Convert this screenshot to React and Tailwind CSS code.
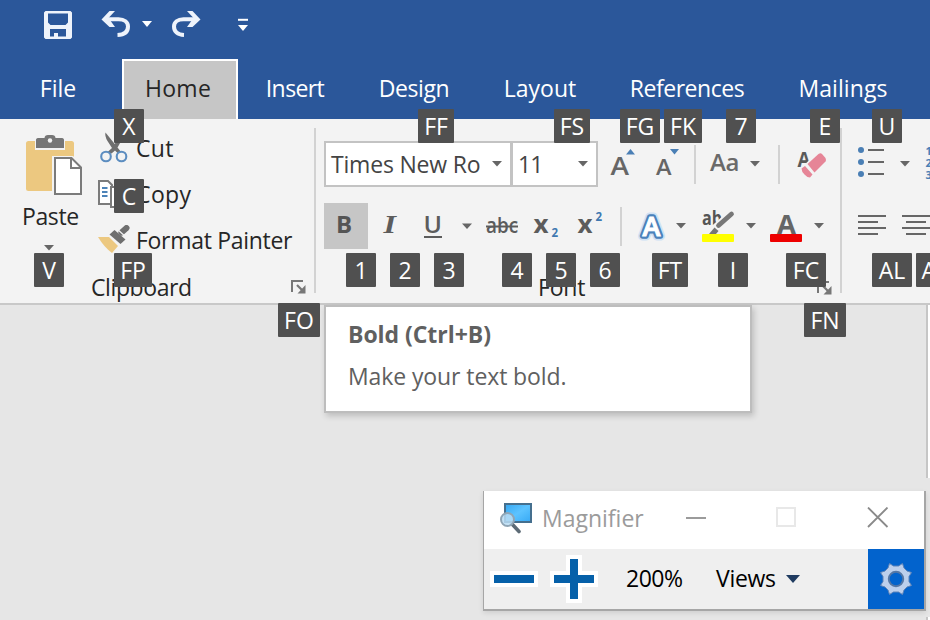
const TABS = [
  { name: 'File',       cls: 'w-[116px] text-white' },
  { name: 'Home',       cls: 'ml-1.5 w-[116px] border-2 border-b-0 border-white bg-[#c6c6c6] pr-1 pb-1 text-[#262626] tracking-[0.3px]' },
  { name: 'Insert',     cls: 'w-[114px] text-white tracking-[-0.6px]' },
  { name: 'Design',     cls: 'w-[124px] text-white tracking-[-0.4px]' },
  { name: 'Layout',     cls: 'w-[128px] text-white' },
  { name: 'References', cls: 'w-[166px] text-white tracking-[-0.45px]' },
  { name: 'Mailings',   cls: 'w-[146px] text-white tracking-[0.1px]' },
]

// access-key badges floating over the ribbon
const KEY_TIPS = [
  { k: 'X',  x: 114, y: 109, w: 30 },
  { k: 'FF', x: 418, y: 109, w: 36 },
  { k: 'FS', x: 554, y: 109, w: 36 },
  { k: 'FG', x: 620, y: 109, w: 40 },
  { k: 'FK', x: 664, y: 109, w: 38 },
  { k: '7',  x: 726, y: 109, w: 30 },
  { k: 'E',  x: 810, y: 109, w: 30 },
  { k: 'U',  x: 872, y: 109, w: 30 },
  { k: 'C',  x: 114, y: 179, w: 30 },
  { k: 'V',  x: 34,  y: 253, w: 30 },
  { k: 'FP', x: 114, y: 253, w: 38 },
  { k: '1',  x: 346, y: 253, w: 30 },
  { k: '2',  x: 390, y: 253, w: 30 },
  { k: '3',  x: 434, y: 253, w: 30 },
  { k: '4',  x: 502, y: 253, w: 30 },
  { k: '5',  x: 546, y: 253, w: 30 },
  { k: '6',  x: 590, y: 253, w: 30 },
  { k: 'FT', x: 652, y: 253, w: 36 },
  { k: 'I',  x: 718, y: 253, w: 30 },
  { k: 'FC', x: 786, y: 253, w: 40 },
  { k: 'AL', x: 872, y: 253, w: 40 },
  { k: 'AC', x: 916, y: 253, w: 40 },
  { k: 'FO', x: 278, y: 303, w: 42 },
  { k: 'FN', x: 804, y: 303, w: 42 },
]

function Caret({ className = '' }) {
  return (
    <svg width="10" height="6" viewBox="0 0 10 6" className={`shrink-0 ${className}`}>
      <path d="M0 0H10L5 5.6Z" fill="#666" />
    </svg>
  )
}

function Divider({ className = '' }) {
  return <div className={`w-0.5 shrink-0 bg-[#d2d2d2] ${className}`} />
}

function Launcher() {
  return (
    <svg width="16" height="16" viewBox="0 0 16 16">
      <path d="M1 13V2H12" fill="none" stroke="#777" strokeWidth="2" />
      <path d="M6 6L11 11" stroke="#777" strokeWidth="2.2" />
      <path d="M14.5 6V14.5H6.5Z" fill="#777" />
    </svg>
  )
}

function TitleBar() {
  return (
    <div className="flex h-[59px] items-start">
      <svg width="28" height="28" viewBox="0 0 28 28" className="ml-11 mt-[11px]">
        <path fillRule="evenodd" fill="#eef3fb"
          d="M1.5 0H26.5L28 1.5V26.5L26.5 28H1.5L0 26.5V1.5ZM4 2.5V11.5L6.5 14H21.5L24 11.5V2.5ZM6 18V25.5H10V22H14V25.5H22V18Z" />
      </svg>
      <svg width="30" height="28" viewBox="0 0 30 28" className="ml-[29px] mt-[10px]">
        <path d="M8.500 1H14L7.500 8L14 17H8.500L0.500 9.500Z" fill="#eef3fb" />
        <path d="M4 9.300H17.500C23.500 9.300 27 12.500 27 16.500C27 21.500 23.500 24.800 16.500 25" fill="none" stroke="#eef3fb" strokeWidth="4" />
      </svg>
      <svg width="10" height="6" viewBox="0 0 10 6" className="ml-[11px] mt-[21px]"><path d="M0 0H10L5 6Z" fill="#fff" /></svg>
      <svg width="30" height="28" viewBox="0 0 30 28" className="ml-[19px] mt-[10px]">
        <path d="M21.500 1H16L22.500 8L16 17H21.500L29.500 9.500Z" fill="#eef3fb" />
        <path d="M26 9.300H12.500C6.500 9.300 3 12.500 3 16.500C3 21.500 6.500 24.800 13 25" fill="none" stroke="#eef3fb" strokeWidth="4" />
      </svg>
      <svg width="10" height="13" viewBox="0 0 10 13" className="ml-[37px] mt-[18px]">
        <path d="M0 1.800H10" stroke="#fff" strokeWidth="2" />
        <path d="M0 7H10L5 13Z" fill="#fff" />
      </svg>
    </div>
  )
}

function PasteIcon() {
  return (
    <svg width="60" height="64" viewBox="0 0 60 64">
      <rect x="2" y="8" width="48" height="50" rx="2.500" fill="#ecc880" />
      <path d="M11 7H41V17H11Z" fill="#f3f3f3" />
      <path d="M14 5H20.500C20.500 3 22 2 24 2H28C30 2 31.500 3 31.500 5H38C39.500 5 40 6 40 7V15H12V7C12 6 12.500 5 14 5Z" fill="#767676" />
      <circle cx="26" cy="7.500" r="2.200" fill="#f3f3f3" />
      <path d="M28 23H49L59 33V63H28Z" fill="#f3f3f3" />
      <path d="M31 25H47.500L57 34.500V61H31Z" fill="#fff" stroke="#7b7b7b" strokeWidth="2" />
      <path d="M47 25.500V35H56.500" fill="none" stroke="#7b7b7b" strokeWidth="2" />
    </svg>
  )
}

function CutIcon() {
  return (
    <svg width="30" height="32" viewBox="0 0 30 32">
      <path d="M6.500 0.500Q5.500 4 8.500 9L13 16L8 20.500L12.500 21.500L16 18.500L19 21.500L22.500 20.500L18.500 15.500Z" fill="#6f6f6f" />
      <path d="M23 1L24 6L18.500 15.500L13 16Z" fill="#6f6f6f" />
      <circle cx="7" cy="24.500" r="4.800" fill="#f3f3f3" stroke="#5c8dc0" strokeWidth="2.100" />
      <circle cx="22.500" cy="24.500" r="4.800" fill="#f3f3f3" stroke="#5c8dc0" strokeWidth="2.100" />
    </svg>
  )
}

function CopyIcon() {
  return (
    <svg width="30" height="30" viewBox="0 0 30 30">
      <path d="M1 2H10L14 6V25H1Z" fill="#fff" stroke="#7b7b7b" strokeWidth="2" />
      <path d="M4 9H9.500M4 13H9.500M4 17H9.500" stroke="#4c83b8" strokeWidth="2" />
      <path d="M13 8H24L28 12V28H13Z" fill="#fff" stroke="#7b7b7b" strokeWidth="2" />
    </svg>
  )
}

function PainterIcon() {
  return (
    <svg width="32" height="30" viewBox="0 0 32 30">
      <path d="M0 12L11 12L20 21L14 28Q6 22 0 12Z" fill="#ecc880" />
      <path d="M16.500 5L27.500 14.500L22.500 19L11.500 9.500Z" fill="#6f6f6f" />
      <path d="M23.500 7.500L28.500 3" stroke="#6f6f6f" strokeWidth="6" strokeLinecap="round" />
      <path d="M18.500 3.500L28.500 12.500" stroke="#f3f3f3" strokeWidth="1.200" />
    </svg>
  )
}

function ClipboardGroup() {
  return (
    <div className="flex w-[314px] flex-col">
      <div className="flex h-[148px]">
        <div className="flex w-[98px] flex-col pt-[14px]">
          <div className="ml-6"><PasteIcon /></div>
          <span className="mt-1 ml-[22px] h-[30px] leading-[30px] tracking-[-0.4px]">Paste</span>
          <Caret className="mt-[14px] ml-11" />
        </div>
        <div className="flex flex-col pt-[6px]">
          <div className="flex h-[46px] items-center">
            <div className="w-[38px] pl-px"><CutIcon /></div>
            <span className="tracking-[0.3px]">Cut</span>
          </div>
          <div className="flex h-[46px] items-center">
            <div className="w-[38px]"><CopyIcon /></div>
            <span className="tracking-[0.4px]">Copy</span>
          </div>
          <div className="flex h-[46px] items-center">
            <div className="w-[38px]"><PainterIcon /></div>
            <span className="tracking-[-0.3px]">Format Painter</span>
          </div>
        </div>
      </div>
      <div className="flex h-9 items-center justify-between pr-[7px] pl-[91px]">
        <span className="mt-1 tracking-[-0.4px]">Clipboard</span>
        <div className="mt-1"><Launcher /></div>
      </div>
    </div>
  )
}

function GrowShrink() {
  return (
    <svg width="92" height="46" viewBox="0 0 92 46" fontFamily="Open Sans, sans-serif" fontWeight="600" fill="#666">
      <text x="12.500" y="34" fontSize="25" textLength="18.500" lengthAdjust="spacingAndGlyphs">A</text>
      <path d="M28 13.500L32.500 8L37 13.500Z" fill="#4a7fb5" />
      <text x="58" y="34" fontSize="21" textLength="15.500" lengthAdjust="spacingAndGlyphs">A</text>
      <path d="M72 8H81L76.500 13.500Z" fill="#4a7fb5" />
    </svg>
  )
}

function EraserIcon() {
  return (
    <svg width="32" height="34" viewBox="0 0 32 34" className="overflow-visible">
      <text x="1.500" y="20" fontSize="21" fontWeight="700" fontFamily="Open Sans, sans-serif" fill="#5a5a5a" textLength="13" lengthAdjust="spacingAndGlyphs">A</text>
      <path d="M6 20L23 4L32 12L16 32L9 30Z" fill="#f3f3f3" />
      <path d="M11.500 17L22.500 7Q24.500 5.500 26 7L29.500 11Q30.500 13 29.500 14.500L18.500 25.500Z" fill="#e68597" />
      <path d="M5.500 21.500L9 19L16.500 27.500L14 30.500Q11 30.500 8.500 27.500Q5.500 24.500 5.500 21.500Z" fill="#e68597" />
    </svg>
  )
}

function StyleIcons() {
  return (
    <svg width="240" height="46" viewBox="0 0 240 46" fontFamily="Open Sans, sans-serif" fontWeight="700" fill="#5c5c5c">
      <text x="15.500" y="30" fontSize="26" fontFamily="Liberation Serif, serif" fontStyle="italic" textLength="12.500" lengthAdjust="spacingAndGlyphs">I</text>
      <text x="55.500" y="30" fontSize="24" fontWeight="600" textLength="18.500" lengthAdjust="spacingAndGlyphs">U</text>
      <path d="M56 34H74" stroke="#5c5c5c" strokeWidth="2" />
      <path d="M94 20.500H104L99 26Z" fill="#666" />
      <text x="118" y="30" fontSize="21" fontWeight="600" textLength="32" lengthAdjust="spacingAndGlyphs">abc</text>
      <path d="M118 23.500H150" stroke="#5c5c5c" strokeWidth="2" />
      <text x="165.500" y="30" fontSize="25" textLength="15" lengthAdjust="spacingAndGlyphs">x</text>
      <text x="183.500" y="34" fontSize="11.500" fill="#3f78b0">2</text>
      <text x="209.500" y="30" fontSize="25" textLength="15" lengthAdjust="spacingAndGlyphs">x</text>
      <text x="227.500" y="18" fontSize="11.500" fill="#3f78b0">2</text>
    </svg>
  )
}

function EffectsIcon() {
  return (
    <svg width="32" height="34" viewBox="0 0 32 34" fontFamily="Open Sans, sans-serif" fontWeight="600" className="overflow-visible">
      <text x="6.500" y="26.500" fontSize="27" fill="none" stroke="#cfe1f3" strokeWidth="9" strokeLinejoin="round">A</text>
      <text x="6.500" y="26.500" fontSize="27" fill="none" stroke="#4a82bb" strokeWidth="5.500" strokeLinejoin="round">A</text>
      <text x="6.500" y="26.500" fontSize="27" fill="#fff" stroke="#fff" strokeWidth="1">A</text>
    </svg>
  )
}

function HighlightIcon() {
  return (
    <svg width="34" height="36" viewBox="0 0 34 36" className="overflow-visible">
      <text x="0" y="17" fontSize="19" fontWeight="700" fontFamily="Open Sans, sans-serif" fill="#555" textLength="20" lengthAdjust="spacingAndGlyphs">ab</text>
      <path d="M8 25L30 5" stroke="#f3f3f3" strokeWidth="8" />
      <path d="M16.500 17.500L29.500 6" stroke="#777" strokeWidth="4.800" strokeLinecap="round" />
      <path d="M7 26L12.500 19.500L16.500 23L14 26Z" fill="#777" />
      <rect x="0" y="26" width="32" height="8" rx="1" fill="#ffff00" />
    </svg>
  )
}

function FontColorIcon() {
  return (
    <svg width="34" height="36" viewBox="0 0 34 36" className="overflow-visible">
      <text x="7" y="26" fontSize="26" fontWeight="700" fontFamily="Open Sans, sans-serif" fill="#666" textLength="19" lengthAdjust="spacingAndGlyphs">A</text>
      <rect x="0" y="26" width="32" height="8" rx="1" fill="#ee0000" />
    </svg>
  )
}

function FontGroup() {
  return (
    <div className="flex w-[524px] flex-col pt-[22px] pl-2">
      <div className="flex h-[46px] items-center">
        <div className="flex h-[46px] w-[188px] items-center justify-between border-2 border-[#c3c3c3] bg-white pr-[8px] pl-[5px] text-[#444]">
          <span className="tracking-[-0.2px]">Times New Ro</span>
          <Caret />
        </div>
        <div className="flex h-[46px] w-[86px] items-center justify-between border-2 border-[#c3c3c3] border-l bg-white pr-[8px] pl-[5px] text-[#444]">
          <span className="tracking-[-0.8px]">11</span>
          <Caret />
        </div>
        <GrowShrink />
        <Divider className="ml-1 h-[39px]" />
        <span className="mb-1 ml-[14px] w-[40px] text-[24px] font-semibold tracking-[-0.3px] text-[#6a6a6a]">Aa</span>
        <Caret />
        <Divider className="ml-[18px] h-[39px]" />
        <div className="ml-4"><EraserIcon /></div>
      </div>

      <div className="mt-4 flex h-[46px] items-center">
        <div className="flex h-[46px] w-11 items-center justify-center bg-[#c6c6c6] pr-1 pb-1 text-[24px] font-bold text-[#555]">B</div>
        <StyleIcons />
        <Divider className="ml-3 h-[39px]" />
        <div className="ml-[14px]"><EffectsIcon /></div>
        <Caret className="ml-2" />
        <div className="ml-4"><HighlightIcon /></div>
        <Caret className="ml-[10px]" />
        <div className="ml-[14px]"><FontColorIcon /></div>
        <Caret className="ml-[10px]" />
      </div>

      <div className="mt-[18px] flex h-9 items-center">
        <span className="ml-[214px] w-[279px] pt-1 tracking-[-0.2px]">Font</span>
        <div className="pt-1.5"><Launcher /></div>
      </div>
    </div>
  )
}

function ParagraphGroup() {
  return (
    <div className="w-[88px] overflow-hidden pt-[22px] pl-4">
      <svg width="72" height="46" viewBox="0 0 72 46">
        <g fill="#4a7fb5">
          <circle cx="3" cy="9" r="3" />
          <circle cx="3" cy="21" r="3" />
          <circle cx="3" cy="33" r="3" />
        </g>
        <path d="M10 9H26M10 21H26M10 33H26" stroke="#666" strokeWidth="2" />
        <path d="M42 20H52L47 25.600Z" fill="#666" />
        <g fontSize="11" fontWeight="700" fontFamily="Open Sans, sans-serif" fill="#4a7fb5">
          <text x="67.500" y="14">1</text>
          <text x="67.500" y="26">2</text>
          <text x="67.500" y="38">3</text>
        </g>
      </svg>
      <svg width="72" height="46" viewBox="0 0 72 46" className="mt-4">
        <path d="M0 13H28M0 19H20M0 25H28M0 31H20M44 13H72M48 19H68M44 25H72M48 31H68" stroke="#666" strokeWidth="2" />
      </svg>
    </div>
  )
}

function Tooltip() {
  return (
    <div className="absolute top-[305px] left-[324px] h-[108px] w-[428px] border-2 border-[#bdbdbd] bg-white pl-[22px] text-[#606060] shadow-[2px_3px_6px_rgba(0,0,0,0.18)]">
      <p className="mt-[11px] leading-[32px] font-bold tracking-[-0.05px]">Bold (Ctrl+B)</p>
      <p className="mt-[10px] leading-[32px] tracking-[-0.1px]">Make your text bold.</p>
    </div>
  )
}

function MagnifierWindow() {
  return (
    <div className="absolute top-[491px] left-[483px] flex h-[120px] w-[443px] flex-col border-r-2 border-b-2 border-l border-[#a6a6a6] bg-[#efefef] shadow-[0_2px_5px_rgba(0,0,0,0.1)]">
      <div className="flex h-[58px] items-center bg-white pb-1">
        <svg width="34" height="32" viewBox="0 0 34 32" className="ml-[15px]">
          <defs>
            <linearGradient id="screen" x1="0" y1="0" x2="1" y2="1">
              <stop offset="0" stopColor="#35a7f2" />
              <stop offset="0.500" stopColor="#5cc3ff" />
              <stop offset="1" stopColor="#36a9f5" />
            </linearGradient>
          </defs>
          <rect x="6" y="2" width="26" height="18" fill="url(#screen)" stroke="#456f8e" strokeWidth="2" />
          <path d="M13 22L20 29.500" stroke="#5d6b76" strokeWidth="3.600" strokeLinecap="round" />
          <circle cx="8.500" cy="17.500" r="6.500" fill="#b9dcf3" fillOpacity="0.850" stroke="#8fa5b5" strokeWidth="2" />
        </svg>
        <span className="ml-[9px] w-[144px] text-[#9b9b9b]">Magnifier</span>
        <svg width="204" height="22" viewBox="0 0 204 22" fill="none">
          <path d="M0 11H20" stroke="#909090" strokeWidth="1.800" />
          <rect x="91" y="1" width="18" height="18" stroke="#e8e8e8" strokeWidth="2" />
          <path d="M182 0.500L201.500 20M201.500 0.500L182 20" stroke="#8a8a8a" strokeWidth="1.800" />
        </svg>
      </div>
      <div className="flex h-[60px] items-center text-black">
        <svg width="108" height="48" viewBox="0 0 108 48" className="ml-1.5">
          <path d="M0 16H48V32H0ZM60 16H76V0H92V16H108V32H92V48H76V32H60Z" fill="#fff" />
          <path d="M4 20H44V28H4ZM64 20H80V4H88V20H104V28H88V44H80V28H64Z" fill="#0560a9" />
        </svg>
        <span className="mb-0.5 ml-[28px] w-[90px] tracking-[-0.5px]">200%</span>
        <span className="mb-0.5 w-[70px] tracking-[-0.3px]">Views</span>
        <svg width="14" height="8" viewBox="0 0 14 8"><path d="M0 0H14L7 8Z" fill="#1f3b60" /></svg>
        <div className="ml-auto flex h-[60px] w-14 items-center justify-center bg-[#0263cd]">
          <svg width="34" height="34" viewBox="-17 -17 34 34">
            <path d="M-6.500 -15.500L-2.500 -13H2.500L6.500 -15.500L8 -11L11 -8L15.500 -6.500L13 -2.500V2.500L15.500 6.500L11 8L8 11L6.500 15.500L2.500 13H-2.500L-6.500 15.500L-8 11L-11 8L-15.500 6.500L-13 2.500V-2.500L-15.500 -6.500L-11 -8L-8 -11Z"
              fill="#bccfec" stroke="#5d83b8" strokeWidth="1" strokeLinejoin="round" />
            <circle r="7.200" fill="#0263cd" stroke="#5577a5" strokeWidth="2" />
          </svg>
        </div>
      </div>
    </div>
  )
}

export default function App() {
  return (
    <div className="relative h-[620px] w-[930px] overflow-hidden bg-[#e6e6e6] font-['Open_Sans',sans-serif] text-[23px] whitespace-nowrap text-[#262626]">
      <header className="h-[119px] bg-[#2b579a]">
        <TitleBar />
        <nav className="flex h-[60px]">
          {TABS.map(t => (
            <div key={t.name} className={`flex shrink-0 items-center justify-center pb-0.5 ${t.cls}`}>{t.name}</div>
          ))}
        </nav>
      </header>

      <section className="flex h-[186px] border-b-2 border-[#c8c8c8] bg-[#f3f3f3]">
        <ClipboardGroup />
        <Divider className="mt-[9px] h-[165px]" />
        <FontGroup />
        <Divider className="mt-[9px] h-[165px]" />
        <ParagraphGroup />
      </section>

      {/* edge of the page in the document area */}
      <main className="flex h-[315px] flex-col items-end justify-between">
        <div className="h-[173px] w-1 border-l-2 border-[#c6c6c6] bg-white" />
        <div className="h-[3px] w-1 border-l-2 border-[#c6c6c6] bg-white" />
      </main>

      <Tooltip />
      <MagnifierWindow />

      {KEY_TIPS.map(t => (
        <span key={t.k} className="absolute flex h-[34px] items-center justify-center rounded-[1px] bg-[#505050] text-white"
          style={{ left: t.x, top: t.y, width: t.w }}>
          {t.k}
        </span>
      ))}
    </div>
  )
}
